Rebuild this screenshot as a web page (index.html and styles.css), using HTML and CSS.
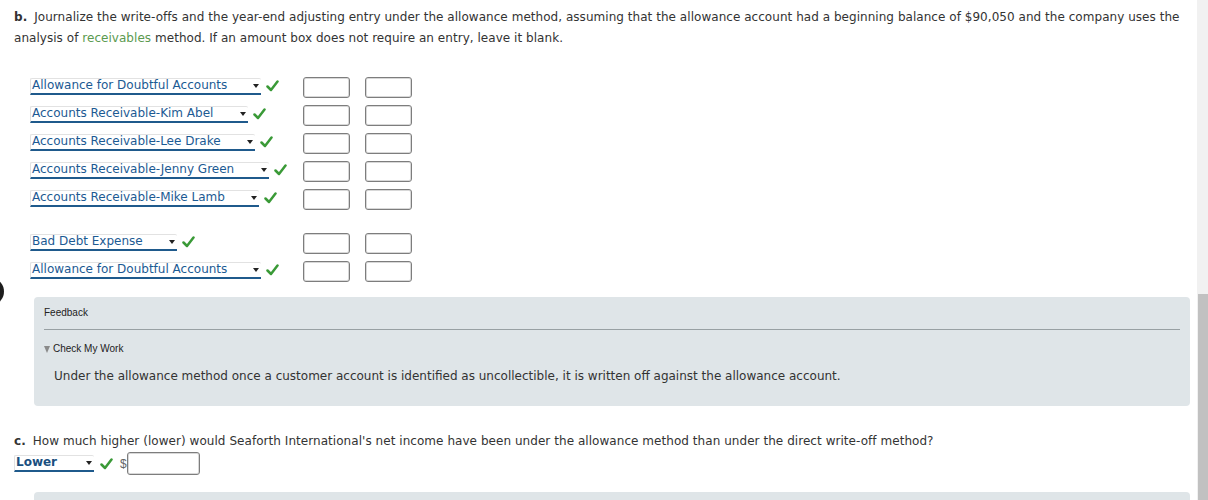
FILE: index.html
```html
<!DOCTYPE html>
<html>
<head>
<meta charset="utf-8">
<link rel="stylesheet" href="styles.css">
</head>
<body>
<div class="blob"></div>
<div class="page">
  <p class="intro"><b class="lbl">b.</b>Journalize the write-offs and the year-end adjusting entry under the allowance method, assuming that the allowance account had a beginning balance of $90,050 and the company uses the analysis of <span class="green">receivables</span> method. If an amount box does not require an entry, leave it blank.</p>

  <div class="journal">
    <div class="group">
      <div class="row"><div class="acct"><span class="sel w231">Allowance for Doubtful Accounts<i class="arr"></i></span><svg class="chk" viewBox="0 0 13 12"><path d="M1.5 6.5 L5 10 L11.5 1.5"/></svg></div><span class="box"></span><span class="box"></span></div>
      <div class="row"><div class="acct"><span class="sel w218">Accounts Receivable-Kim Abel<i class="arr"></i></span><svg class="chk" viewBox="0 0 13 12"><path d="M1.5 6.5 L5 10 L11.5 1.5"/></svg></div><span class="box"></span><span class="box"></span></div>
      <div class="row"><div class="acct"><span class="sel w225">Accounts Receivable-Lee Drake<i class="arr"></i></span><svg class="chk" viewBox="0 0 13 12"><path d="M1.5 6.5 L5 10 L11.5 1.5"/></svg></div><span class="box"></span><span class="box"></span></div>
      <div class="row"><div class="acct"><span class="sel w239">Accounts Receivable-Jenny Green<i class="arr"></i></span><svg class="chk" viewBox="0 0 13 12"><path d="M1.5 6.5 L5 10 L11.5 1.5"/></svg></div><span class="box"></span><span class="box"></span></div>
      <div class="row"><div class="acct"><span class="sel w229">Accounts Receivable-Mike Lamb<i class="arr"></i></span><svg class="chk" viewBox="0 0 13 12"><path d="M1.5 6.5 L5 10 L11.5 1.5"/></svg></div><span class="box"></span><span class="box"></span></div>
    </div>
    <div class="group">
      <div class="row"><div class="acct"><span class="sel w147">Bad Debt Expense<i class="arr"></i></span><svg class="chk" viewBox="0 0 13 12"><path d="M1.5 6.5 L5 10 L11.5 1.5"/></svg></div><span class="box"></span><span class="box"></span></div>
      <div class="row"><div class="acct"><span class="sel w231">Allowance for Doubtful Accounts<i class="arr"></i></span><svg class="chk" viewBox="0 0 13 12"><path d="M1.5 6.5 L5 10 L11.5 1.5"/></svg></div><span class="box"></span><span class="box"></span></div>
    </div>
  </div>

  <div class="feedback">
    <div class="fb-title">Feedback</div>
    <div class="fb-rule"></div>
    <div class="fb-check"><span class="tri"></span>Check My Work</div>
    <p class="fb-text">Under the allowance method once a customer account is identified as uncollectible, it is written off against the allowance account.</p>
  </div>

  <p class="question"><b class="lbl">c.</b>How much higher (lower) would Seaforth International's net income have been under the allowance method than under the direct write-off method?</p>
  <div class="answer">
    <span class="sel bold w80">Lower<i class="arr"></i></span>
    <svg class="chk" viewBox="0 0 13 12"><path d="M1.5 6.5 L5 10 L11.5 1.5"/></svg>
    <span class="dollar">$</span><span class="box wide"></span>
  </div>

  <div class="feedback next"></div>
</div>
<div class="scrollbar"><div class="thumb"></div></div>
</body>
</html>
```
FILE: styles.css
```css
html, body {
  margin: 0;
  padding: 0;
  background: #fff;
  overflow: hidden;
}
body {
  font-family: "DejaVu Sans", Verdana, sans-serif;
  font-size: 12px;
  color: #333;
}
.page {
  padding: 7px 18px 0 14px;
}
.intro {
  margin: 0;
  line-height: 21px;
  letter-spacing: 0.04px;
}
.lbl {
  font-weight: bold;
  margin-right: 7px;
}
.green {
  color: #5b9a4f;
}
.journal {
  margin-top: 24px;
  padding-left: 16px;
  display: flex;
  flex-direction: column;
  gap: 16px;
}
.row {
  display: grid;
  grid-template-columns: 273px 62px 47px;
  height: 28px;
  align-items: center;
}
.acct {
  display: flex;
  align-items: center;
}
.sel {
  position: relative;
  display: inline-block;
  box-sizing: border-box;
  height: 17px;
  line-height: 13px;
  padding: 0 14px 0 1px;
  color: #1c5a93;
  background: #fff;
  border-top: 1px solid #e2e2e2;
  border-left: 1px solid #e2e2e2;
  border-bottom: 2px solid #1f5a8c;
  border-radius: 2px 2px 0 0;
  white-space: nowrap;
  margin-top: -2px;
}
.sel.bold { font-weight: bold; color: #1a4f80; margin-top: 0; }
.w231 { width: 231px; }
.w218 { width: 218px; }
.w225 { width: 225px; }
.w239 { width: 239px; }
.w229 { width: 229px; }
.w147 { width: 147px; }
.w80 { width: 80px; }
.arr {
  position: absolute;
  right: 2px;
  top: 5px;
  width: 0;
  height: 0;
  border-left: 3.5px solid transparent;
  border-right: 3.5px solid transparent;
  border-top: 4px solid #222;
}
.chk {
  width: 13px;
  height: 12px;
  margin-left: 5px;
  margin-top: -2px;
  flex: none;
}
.chk path {
  fill: none;
  stroke: #3a9a37;
  stroke-width: 2.5;
  stroke-linecap: round;
  stroke-linejoin: round;
}
.box {
  display: block;
  box-sizing: border-box;
  width: 47px;
  height: 21px;
  border: 1px solid #7d7d7d;
  border-radius: 3px;
  background: #fff;
  box-shadow: inset 0 0 0 1px #d8d8d8;
}
.box.wide {
  width: 73px;
  height: 23px;
}
.feedback {
  margin: 12px 0 0 20px;
  background: #dfe5e8;
  border-radius: 4px;
  padding: 9px 10px 0 10px;
  height: 109px;
  box-sizing: border-box;
}
.fb-title {
  font-family: "Liberation Sans", Arial, sans-serif;
  font-size: 10px;
  line-height: 14px;
  color: #222;
}
.fb-rule {
  margin-top: 9px;
  height: 1px;
  border-top: 1px solid #98a0a3;
}
.fb-check {
  margin-top: 11px;
  font-family: "Liberation Sans", Arial, sans-serif;
  font-size: 10px;
  line-height: 14px;
  color: #222;
  display: flex;
  align-items: center;
}
.tri {
  display: inline-block;
  width: 0;
  height: 0;
  border-left: 3px solid transparent;
  border-right: 3px solid transparent;
  border-top: 7px solid #8a8a8a;
  margin-right: 3px;
}
.fb-text {
  margin: 12px 0 0 10px;
  font-size: 12px;
  line-height: 16px;
  color: #333;
}
.question {
  margin: 26px 0 0 0;
  line-height: 18px;
  letter-spacing: 0.05px;
}
.answer {
  display: flex;
  align-items: center;
  height: 23px;
  margin-top: 2px;
}
.answer .chk {
  margin-left: 6px;
  margin-top: 0;
}
.dollar {
  margin-left: 7px;
  color: #666;
  font-family: "Liberation Sans", Arial, sans-serif;
  font-size: 12px;
}
.feedback.next {
  margin-top: 17px;
  height: 20px;
  padding: 0;
}
.blob {
  position: absolute;
  left: -17px;
  top: 279px;
  width: 21px;
  height: 25px;
  border-radius: 50%;
  background: #1d1d1d;
}
.scrollbar {
  position: fixed;
  top: 0;
  right: 0;
  width: 11px;
  height: 100%;
  background: #f1f1f1;
}
.thumb {
  position: absolute;
  left: 1px;
  right: 0;
  top: 294px;
  bottom: 0;
  background: #c1c1c1;
}
```
